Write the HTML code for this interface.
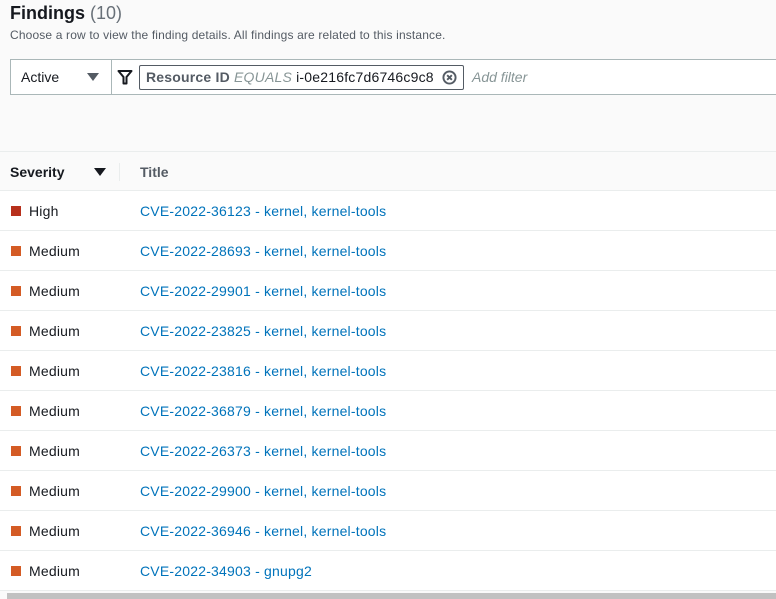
<!DOCTYPE html>
<html><head><style>
*{box-sizing:border-box;margin:0;padding:0}
body{width:776px;height:599px;overflow:hidden;background:#fafafa;font-family:"Liberation Sans",Arial,sans-serif;color:#16191f;position:relative}
.h{position:absolute;left:10px;top:3px;font-size:18px;font-weight:bold}
.h span{font-weight:normal;color:#687078}
.sub{position:absolute;left:10px;top:28px;font-size:12px;color:#545b64;letter-spacing:0.15px}
.bar{position:absolute;left:10px;top:59px;width:780px;height:36px;border:1px solid #aab7b8;background:#fff}
.act{position:absolute;left:0;top:0;width:101px;height:34px;border-right:1px solid #aab7b8;font-size:14px;padding:9px 0 0 10px}
.tri{position:absolute;width:0;height:0;border-left:6px solid transparent;border-right:6px solid transparent;border-top:8px solid #545b64}
.tok{position:absolute;left:128px;top:5px;width:325px;height:25px;border:1px solid #545b64;border-radius:2px;font-size:14px;padding:3px 0 0 6px;white-space:nowrap;letter-spacing:0.2px}
.tok b{color:#545b64}
.tok i{color:#879596}
.add{position:absolute;left:461px;top:9px;font-size:14px;font-style:italic;color:#879596}
.tbl{position:absolute;left:0;top:151px;width:776px;border-top:1px solid #eaeded}
.hd{height:39px;background:#fafafa;border-bottom:1px solid #eaeded;position:relative;font-size:14px;font-weight:bold;color:#545b64}
.row{height:40px;background:#fff;border-bottom:1px solid #eaeded;position:relative;font-size:14px;letter-spacing:0.2px}
.sq{position:absolute;left:11px;top:15px;width:10px;height:10px}
.sv{position:absolute;left:29px;top:12px}
.t{position:absolute;left:140px;top:12px;color:#0073bb}
.sb{position:absolute;left:7px;top:593px;width:769px;height:6px;background:#c1c1c1}
</style></head><body>
<div class="h">Findings <span>(10)</span></div>
<div class="sub">Choose a row to view the finding details. All findings are related to this instance.</div>
<div class="bar">
<div class="act">Active<div class="tri" style="left:76px;top:13px"></div></div>
<svg style="position:absolute;left:106px;top:9px" width="16" height="16" viewBox="0 0 16 16"><path d="M1.5 2h13L9.5 8v6.5h-3V8z" fill="none" stroke="#16191f" stroke-width="2" stroke-linejoin="round"/></svg>
<div class="tok"><b>Resource ID</b> <i>EQUALS</i> i-0e216fc7d6746c9c8
<svg style="position:absolute;left:302px;top:4px" width="15" height="15" viewBox="0 0 16 16"><circle cx="8" cy="8" r="6.5" fill="none" stroke="#545b64" stroke-width="2"/><path d="M5.5 5.5l5 5M10.5 5.5l-5 5" stroke="#545b64" stroke-width="2"/></svg></div>
<div class="add">Add filter</div>
</div>
<div class="tbl">
<div class="hd"><span style="position:absolute;left:10px;top:12px;color:#16191f">Severity</span><div class="tri" style="left:94px;top:16px;border-top-color:#16191f"></div><div style="position:absolute;left:119px;top:11px;width:1px;height:18px;background:#eaeded"></div><span style="position:absolute;left:140px;top:12px">Title</span></div>
<div class="row"><div class="sq" style="background:#b7301c"></div><span class="sv">High</span><span class="t">CVE-2022-36123 - kernel, kernel-tools</span></div>
<div class="row"><div class="sq" style="background:#d45b25"></div><span class="sv">Medium</span><span class="t">CVE-2022-28693 - kernel, kernel-tools</span></div>
<div class="row"><div class="sq" style="background:#d45b25"></div><span class="sv">Medium</span><span class="t">CVE-2022-29901 - kernel, kernel-tools</span></div>
<div class="row"><div class="sq" style="background:#d45b25"></div><span class="sv">Medium</span><span class="t">CVE-2022-23825 - kernel, kernel-tools</span></div>
<div class="row"><div class="sq" style="background:#d45b25"></div><span class="sv">Medium</span><span class="t">CVE-2022-23816 - kernel, kernel-tools</span></div>
<div class="row"><div class="sq" style="background:#d45b25"></div><span class="sv">Medium</span><span class="t">CVE-2022-36879 - kernel, kernel-tools</span></div>
<div class="row"><div class="sq" style="background:#d45b25"></div><span class="sv">Medium</span><span class="t">CVE-2022-26373 - kernel, kernel-tools</span></div>
<div class="row"><div class="sq" style="background:#d45b25"></div><span class="sv">Medium</span><span class="t">CVE-2022-29900 - kernel, kernel-tools</span></div>
<div class="row"><div class="sq" style="background:#d45b25"></div><span class="sv">Medium</span><span class="t">CVE-2022-36946 - kernel, kernel-tools</span></div>
<div class="row"><div class="sq" style="background:#d45b25"></div><span class="sv">Medium</span><span class="t">CVE-2022-34903 - gnupg2</span></div>
</div>
<div class="sb"></div>
</body></html>
